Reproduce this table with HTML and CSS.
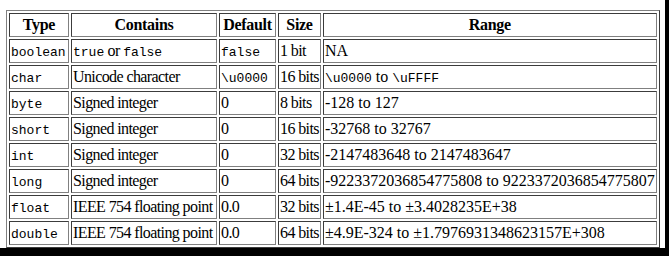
FILE: index.html
```html
<!DOCTYPE html>
<html>
<head>
<meta charset="utf-8">
<link rel="stylesheet" href="styles.css">
</head>
<body>
<div class="frame">
<table class="types">
<colgroup>
<col class="c-type"><col class="c-contains"><col class="c-default"><col class="c-size"><col class="c-range">
</colgroup>
<tr><th>Type</th><th>Contains</th><th>Default</th><th>Size</th><th>Range</th></tr>
<tr><td><code>boolean</code></td><td><code>true</code> or <code>false</code></td><td><code>false</code></td><td>1 bit</td><td class="num">NA</td></tr>
<tr><td><code>char</code></td><td>Unicode character</td><td><code>\u0000</code></td><td>16 bits</td><td class="num"><code>\u0000</code> to <code>\uFFFF</code></td></tr>
<tr><td><code>byte</code></td><td>Signed integer</td><td>0</td><td>8 bits</td><td class="num">-128 to 127</td></tr>
<tr><td><code>short</code></td><td>Signed integer</td><td>0</td><td>16 bits</td><td class="num">-32768 to 32767</td></tr>
<tr><td><code>int</code></td><td>Signed integer</td><td>0</td><td>32 bits</td><td class="num">-2147483648 to 2147483647</td></tr>
<tr><td><code>long</code></td><td>Signed integer</td><td>0</td><td>64 bits</td><td class="num">-9223372036854775808 to 9223372036854775807</td></tr>
<tr><td><code>float</code></td><td>IEEE 754 floating point</td><td>0.0</td><td>32 bits</td><td class="num">±1.4E-45 to ±3.4028235E+38</td></tr>
<tr><td><code>double</code></td><td>IEEE 754 floating point</td><td>0.0</td><td>64 bits</td><td class="num">±4.9E-324 to ±1.7976931348623157E+308</td></tr>
</table>
</div>
</body>
</html>
```
FILE: styles.css
```css
html, body {
  margin: 0;
  padding: 0;
  background: #000;
  height: 100%;
}
.frame {
  background: #fff;
  width: 659px;
  height: 238px;
  padding: 10px 0 0 6px;
}
.types {
  table-layout: fixed;
  border-collapse: separate;
  border-spacing: 2px;
  border-style: solid;
  border-width: 1px;
  border-color: #808080 #3c3c3c #3c3c3c #808080;
  font-family: "Liberation Serif", "Times New Roman", serif;
  font-size: 16px;
  color: #000;
}
.c-type { width: 60px; }
.c-contains { width: 146px; }
.c-default { width: 57px; }
.c-size { width: 42px; }
.c-range { width: 333px; }
.types th, .types td {
  border-style: solid;
  border-width: 1px;
  border-color: #3c3c3c #808080 #808080 #3c3c3c;
  padding: 1px;
  height: 20px;
  line-height: 20px;
  white-space: nowrap;
  overflow: hidden;
  box-sizing: border-box;
}
.types th {
  font-weight: bold;
  text-align: center;
  letter-spacing: -0.3px;
}
.types td {
  text-align: left;
  letter-spacing: -0.6px;
}
.types td.num {
  letter-spacing: 0;
}
.types code {
  font-family: "Liberation Mono", "Courier New", monospace;
  font-size: 13px;
  line-height: 14px;
  letter-spacing: 0;
}
```
